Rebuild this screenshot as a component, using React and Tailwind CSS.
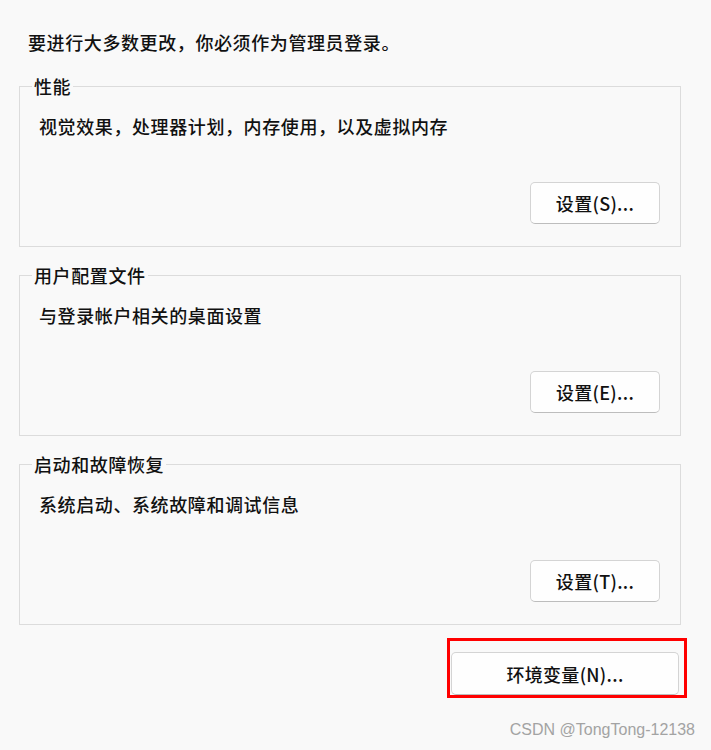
export default function App() {
  const groups = [
    { title: "性能", desc: "视觉效果，处理器计划，内存使用，以及虚拟内存", btn: "设置(S)..." },
    { title: "用户配置文件", desc: "与登录帐户相关的桌面设置", btn: "设置(E)..." },
    { title: "启动和故障恢复", desc: "系统启动、系统故障和调试信息", btn: "设置(T)..." },
  ];
  return (
    <div className="w-[711px] h-[750px] bg-[#f9f9f9] font-['Noto_Sans_CJK_SC',sans-serif] font-medium text-[18px] tracking-[0.6px] text-[#111111] pt-[29px] overflow-hidden">
      <p className="pl-[28px] leading-[26px]">要进行大多数更改，你必须作为管理员登录。</p>
      <div className="mt-[19px] flex flex-col gap-[16px]">
        {groups.map((g) => (
          <fieldset key={g.title} className="ml-[19px] w-[662px] border border-[#dcdcdc] flex flex-col">
            <legend className="ml-[12px] px-[2px] leading-[24px]">{g.title}</legend>
            <p className="mt-[15px] pl-[19px] leading-[26px]">{g.desc}</p>
            <div className="flex justify-end mt-[43px] mb-[22px] mr-[20px]">
              <button className="w-[130px] h-[42px] rounded-[5px] border border-[#d4d4d4] border-b-[#bdbdbd] bg-[#fefefe] text-[18px] leading-[24px] tracking-[0.3px] text-[#111111]">
                {g.btn}
              </button>
            </div>
          </fieldset>
        ))}
      </div>
      <div className="ml-[447px] mt-[13px] w-[240px] h-[60px] border-[3px] border-[#ff0000] pl-[1px] pt-[11px]">
        <button className="w-[228px] h-[43px] rounded-[5px] border border-[#d4d4d4] border-b-[#bdbdbd] bg-[#fefefe] text-[18px] leading-[24px] tracking-[0.3px] text-[#111111]">
          环境变量(N)...
        </button>
      </div>
      <p className="mt-[22px] pr-[16px] text-right font-['Liberation_Sans',sans-serif] font-normal text-[16px] leading-[20px] tracking-normal text-[#a3a3a3]">
        CSDN @TongTong-12138
      </p>
    </div>
  );
}
